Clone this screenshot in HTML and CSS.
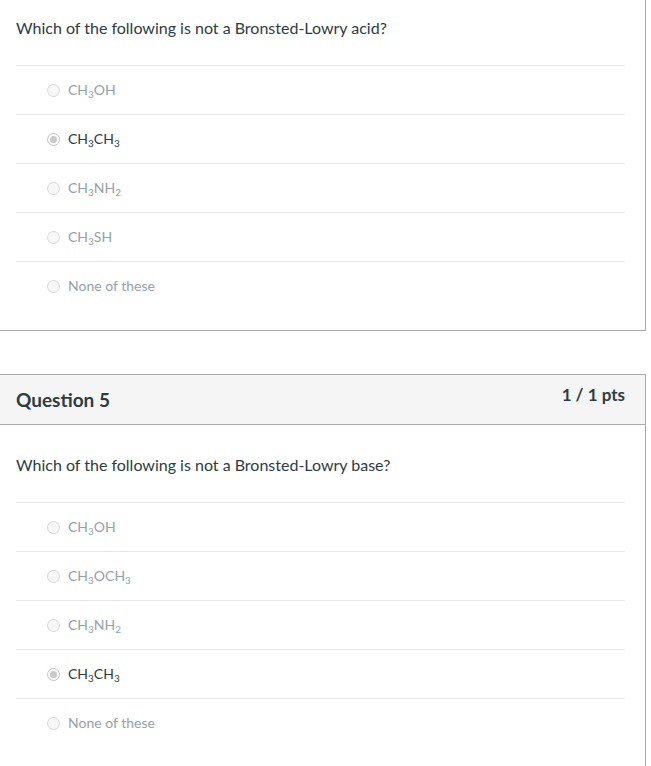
FILE: index.html
```html
<!DOCTYPE html>
<html>
<head>
<meta charset="utf-8">
<link rel="stylesheet" href="styles.css">
</head>
<body>
<div class="quiz">
  <div class="card card-first">
    <div class="card-body">
      <p class="question-text">Which of the following is not a Bronsted-Lowry acid?</p>
      <div class="answers">
        <div class="answer"><span class="radio"></span><span class="label">CH<sub>3</sub>OH</span></div>
        <div class="answer selected"><span class="radio"></span><span class="label">CH<sub>3</sub>CH<sub>3</sub></span></div>
        <div class="answer"><span class="radio"></span><span class="label">CH<sub>3</sub>NH<sub>2</sub></span></div>
        <div class="answer"><span class="radio"></span><span class="label">CH<sub>3</sub>SH</span></div>
        <div class="answer"><span class="radio"></span><span class="label">None of these</span></div>
      </div>
    </div>
  </div>

  <div class="card">
    <div class="card-header">
      <h2 class="question-name">Question 5</h2>
      <span class="points">1 / 1 pts</span>
    </div>
    <div class="card-body">
      <p class="question-text">Which of the following is not a Bronsted-Lowry base?</p>
      <div class="answers">
        <div class="answer"><span class="radio"></span><span class="label">CH<sub>3</sub>OH</span></div>
        <div class="answer"><span class="radio"></span><span class="label">CH<sub>3</sub>OCH<sub>3</sub></span></div>
        <div class="answer"><span class="radio"></span><span class="label">CH<sub>3</sub>NH<sub>2</sub></span></div>
        <div class="answer selected"><span class="radio"></span><span class="label">CH<sub>3</sub>CH<sub>3</sub></span></div>
        <div class="answer"><span class="radio"></span><span class="label">None of these</span></div>
      </div>
    </div>
  </div>
</div>
</body>
</html>
```

FILE: styles.css
```css
html, body {
  margin: 0;
  padding: 0;
  background: #ffffff;
}

body {
  font-family: Lato, "Open Sans", "Liberation Sans", sans-serif;
  color: #2d3b45;
  overflow: hidden;
}

.quiz {
  margin-top: -13px;
  margin-left: -1px;
  width: 647px;
}

.card {
  border: 1px solid #aaaaaa;
  background: #ffffff;
}

.card + .card {
  margin-top: 43px;
}

.card-header {
  display: flex;
  justify-content: space-between;
  align-items: flex-start;
  height: 50px;
  box-sizing: border-box;
  padding: 10px 20px 0 16px;
  background: #f5f5f5;
  border-bottom: 1px solid #aaaaaa;
}

.question-name {
  margin: 5px 0 0 0;
  font-size: 19px;
  line-height: 20px;
  font-weight: 700;
  color: #2d3b45;
}

.points {
  font-size: 17px;
  line-height: 20px;
  font-weight: 700;
  color: #2d3b45;
}

.card-body {
  padding: 0 20px 20px 16px;
}

.question-text {
  margin: 0;
  padding: 30px 0 27px 0;
  font-size: 16px;
  line-height: 20px;
  color: #2d3b45;
}

.answer {
  display: flex;
  align-items: center;
  height: 48px;
  border-top: 1px solid #e6e6e6;
  padding-left: 31px;
  font-size: 14px;
  color: #95a1aa;
}

.answer.selected {
  color: #2d3b45;
}

.radio {
  width: 11px;
  height: 11px;
  border-radius: 50%;
  border: 1px solid #d8d8d8;
  background: #f7f7f7;
  margin-right: 8px;
  flex: none;
  position: relative;
}

.answer.selected .radio {
  border-color: #c4c4c4;
  background: #ffffff;
}

.answer.selected .radio::after {
  content: "";
  position: absolute;
  left: 2px;
  top: 2px;
  width: 7px;
  height: 7px;
  border-radius: 50%;
  background: #c8c8c8;
}

.label {
  line-height: 20px;
}

.label sub {
  font-size: 10px;
  line-height: 0;
  vertical-align: -3px;
}
```
